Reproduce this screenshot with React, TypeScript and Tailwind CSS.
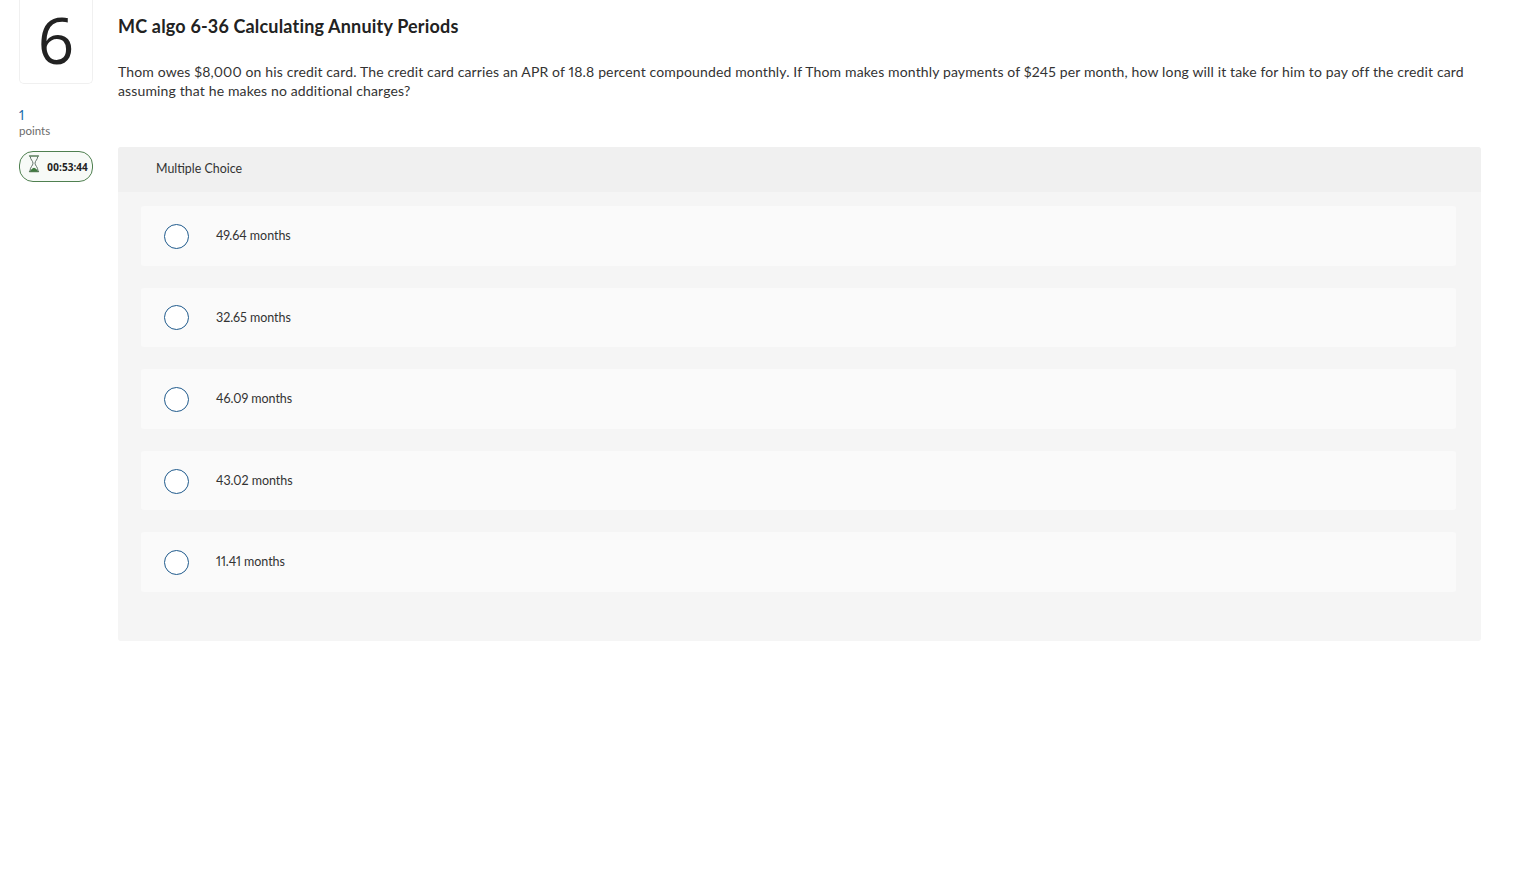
const choices = ["49.64 months", "32.65 months", "46.09 months", "43.02 months", "11.41 months"];

function Hourglass() {
  return (
    <svg width="12" height="18" viewBox="0 0 12 18" fill="none" className="mb-[5px] shrink-0">
      <path d="M1.500 1h9M1.500 16.500h9" stroke="#5b7f5c" strokeWidth="1.300" strokeLinecap="round" />
      <path d="M2.300 1.500c0 3.200 2.700 4.300 2.700 6.700 0 2.500-3 3.600-3 8M9.700 1.500c0 3.200-2.700 4.300-2.700 6.700 0 2.500 3 3.600 3 8" stroke="#5f6f66" strokeWidth="1" />
      <path d="M2.400 16.500c.4-2.200 2-3.300 3.600-3.800 1.600.5 3.200 1.600 3.600 3.800z" fill="#3f7a3f" />
    </svg>
  );
}

export default function App() {
  return (
    <div className="min-h-[894px] bg-white font-['Lato',sans-serif] text-[#222] proportional-nums">
      <div className="flex items-start pl-[19px] pr-[42px]">
        {/* Question number + points + timer */}
        <div className="w-[74px] shrink-0">
          <div className="flex h-[84px] items-center justify-center rounded-b-[5px] border border-t-0 border-[#f0f0f0] bg-white">
            <span className="-mt-[4px] text-[64px] leading-[76px] font-['Open_Sans',sans-serif] font-normal text-[#222]">6</span>
          </div>
          <div className="mt-[24px] text-[13px] leading-[15px] text-[#1a6aa8]">1</div>
          <div className="text-[11.5px] leading-[15px] text-[#6b6b6b]">points</div>
          <div className="mt-[13px] flex h-[31px] items-center gap-[7px] rounded-[14px] border border-[#4f8050] bg-[#f7faf7] pl-[8px]">
            <Hourglass />
            <span className="mt-[2px] text-[10px] font-bold font-['Open_Sans',sans-serif] text-[#222]">00:53:44</span>
          </div>
        </div>

        {/* Question */}
        <div className="ml-[25px] flex-1">
          <h1 className="mt-[15px] text-[18px] leading-[23px] font-bold tracking-[0.18px] text-[#222]">MC algo 6-36 Calculating Annuity Periods</h1>
          <p className="mt-[24px] text-[14px] leading-[19px] tracking-[0.14px] text-[#333]">
            Thom owes $8,000 on his credit card. The credit card carries an APR of 18.8 percent compounded monthly. If Thom makes monthly payments of $245 per month, how long will it take for him to pay off the credit card assuming that he makes no additional charges?
          </p>

          <div className="mt-[47px] h-[494px] rounded-[3px] bg-[#f5f5f5]">
            <div className="flex h-[45px] items-center rounded-t-[3px] bg-[#f0f0f0] pl-[38px] text-[12.4px] text-[#333]">Multiple Choice</div>
            <div className="mt-[14px] flex flex-col gap-[22px] pl-[23px] pr-[25px]">
              {choices.map((c) => (
                <div key={c} className="flex h-[59.6px] items-center rounded-[3px] bg-[#fafafa] pl-[23px]">
                  <span className="mt-[1px] h-[25px] w-[25px] shrink-0 rounded-full border border-[#1f5a8c] bg-white" />
                  <span className="mt-[1px] ml-[27px] text-[12.5px] tracking-[-0.05px] text-[#333]">{c}</span>
                </div>
              ))}
            </div>
          </div>
        </div>
      </div>
    </div>
  );
}
